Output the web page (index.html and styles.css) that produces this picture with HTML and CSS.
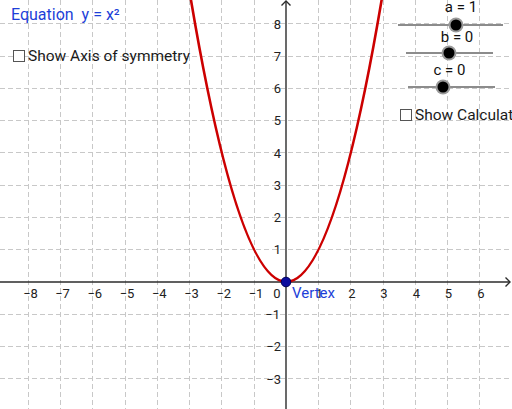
FILE: index.html
```html
<!DOCTYPE html>
<html>
<head>
<meta charset="utf-8">
<link rel="stylesheet" href="styles.css">
</head>
<body>
<div class="board">
  <svg class="canvas" width="512" height="409" viewBox="0 0 512 409" xmlns="http://www.w3.org/2000/svg">
    <g class="grid">
      <line x1="28.5" y1="0" x2="28.5" y2="409"/>
      <line x1="60.5" y1="0" x2="60.5" y2="409"/>
      <line x1="92.5" y1="0" x2="92.5" y2="409"/>
      <line x1="125.5" y1="0" x2="125.5" y2="409"/>
      <line x1="157.5" y1="0" x2="157.5" y2="409"/>
      <line x1="189.5" y1="0" x2="189.5" y2="409"/>
      <line x1="221.5" y1="0" x2="221.5" y2="409"/>
      <line x1="254.5" y1="0" x2="254.5" y2="409"/>
      <line x1="318.5" y1="0" x2="318.5" y2="409"/>
      <line x1="350.5" y1="0" x2="350.5" y2="409"/>
      <line x1="383.5" y1="0" x2="383.5" y2="409"/>
      <line x1="415.5" y1="0" x2="415.5" y2="409"/>
      <line x1="447.5" y1="0" x2="447.5" y2="409"/>
      <line x1="479.5" y1="0" x2="479.5" y2="409"/>
      <line x1="0" y1="23.5" x2="512" y2="23.5"/>
      <line x1="0" y1="56.5" x2="512" y2="56.5"/>
      <line x1="0" y1="88.5" x2="512" y2="88.5"/>
      <line x1="0" y1="120.5" x2="512" y2="120.5"/>
      <line x1="0" y1="152.5" x2="512" y2="152.5"/>
      <line x1="0" y1="185.5" x2="512" y2="185.5"/>
      <line x1="0" y1="217.5" x2="512" y2="217.5"/>
      <line x1="0" y1="249.5" x2="512" y2="249.5"/>
      <line x1="0" y1="314.5" x2="512" y2="314.5"/>
      <line x1="0" y1="346.5" x2="512" y2="346.5"/>
      <line x1="0" y1="378.5" x2="512" y2="378.5"/>
    </g>
    <g class="axes">
      <line x1="0" y1="282" x2="510" y2="282"/>
      <line x1="286" y1="1" x2="286" y2="409"/>
      <polyline class="arrow" points="505.5,277.5 510,282 505.5,286.5"/>
      <polyline class="arrow" points="281.5,5.5 286,1 290.5,5.5"/>
    </g>
    <g class="xlabels">
      <text x="30.5" y="298">−8</text>
      <text x="62.5" y="298">−7</text>
      <text x="94.8" y="298">−6</text>
      <text x="127" y="298">−5</text>
      <text x="159.3" y="298">−4</text>
      <text x="191.5" y="298">−3</text>
      <text x="223.8" y="298">−2</text>
      <text x="256" y="298">−1</text>
      <text x="319.5" y="298">1</text>
      <text x="351.8" y="298">2</text>
      <text x="384" y="298">3</text>
      <text x="416.3" y="298">4</text>
      <text x="448.5" y="298">5</text>
      <text x="480.8" y="298">6</text>
    </g>
    <g class="ylabels">
      <text x="281" y="28.5">8</text>
      <text x="281" y="61">7</text>
      <text x="281" y="93">6</text>
      <text x="281" y="125">5</text>
      <text x="281" y="157.5">4</text>
      <text x="281" y="190">3</text>
      <text x="281" y="222">2</text>
      <text x="281" y="254">1</text>
      <text x="280.5" y="298">0</text>
      <text x="280" y="319">−1</text>
      <text x="281" y="351">−2</text>
      <text x="281" y="383.5">−3</text>
    </g>
    <path class="curve" d="M189.55,-8.45 Q286.3,572.05 383.05,-8.45"/>
    <circle class="vertex" cx="286" cy="282" r="4.8"/>
    <text class="vlabel" x="292" y="298">Vertex</text>

    <g class="slider">
      <text class="slabel" x="461" y="12">a = 1</text>
      <line class="track" x1="398" y1="25" x2="503" y2="25"/>
      <circle class="halo" cx="456" cy="25" r="7.5"/>
      <circle class="knob" cx="456" cy="25" r="5.5"/>
    </g>
    <g class="slider">
      <text class="slabel" x="457" y="42">b = 0</text>
      <line class="track" x1="406" y1="53" x2="493" y2="53"/>
      <circle class="halo" cx="449" cy="53" r="7.5"/>
      <circle class="knob" cx="449" cy="53" r="5.5"/>
    </g>
    <g class="slider">
      <text class="slabel" x="449.5" y="74.5">c = 0</text>
      <line class="track" x1="408" y1="87" x2="495" y2="87"/>
      <circle class="halo" cx="443" cy="87" r="7.5"/>
      <circle class="knob" cx="443" cy="87" r="5.5"/>
    </g>
  </svg>

  <div class="equation">Equation&nbsp; y = x²</div>
  <label class="check check-axis"><span class="box"></span>Show Axis of symmetry</label>
  <label class="check check-calc"><span class="box"></span>Show Calculations</label>
</div>
</body>
</html>
```
FILE: styles.css
```css
html, body {
  margin: 0;
  padding: 0;
  background: #ffffff;
}

.board {
  position: relative;
  width: 512px;
  height: 409px;
  overflow: hidden;
  font-family: Roboto, "Noto Sans", sans-serif;
}

.canvas {
  display: block;
}

.grid line {
  stroke: #c8c8c8;
  stroke-width: 1;
  stroke-dasharray: 5 3;
}

.axes line,
.axes .arrow {
  stroke: #2b2b2b;
  stroke-width: 1.4;
  fill: none;
}

.xlabels text {
  font: 13px Roboto, sans-serif;
  fill: #222;
  text-anchor: middle;
}

.ylabels text {
  font: 13px Roboto, sans-serif;
  fill: #222;
  text-anchor: end;
}

.curve {
  fill: none;
  stroke: #cc0000;
  stroke-width: 2.6;
}

.vertex {
  fill: #0c0c9e;
  stroke: #00005a;
  stroke-width: 1;
}

.vlabel {
  font: 15px Roboto, sans-serif;
  fill: #1d3fd8;
}

.slabel {
  font: 15px Roboto, sans-serif;
  fill: #111;
  text-anchor: middle;
}

.track {
  stroke: #8c8c8c;
  stroke-width: 2;
}

.halo {
  fill: #9a9a9a;
}

.knob {
  fill: #000;
}

.equation {
  position: absolute;
  left: 11px;
  top: 5px;
  font-size: 16px;
  line-height: 19px;
  color: #1d3fd8;
  white-space: nowrap;
}

.check {
  position: absolute;
  display: flex;
  align-items: center;
  gap: 3px;
  font-size: 15.5px;
  line-height: 20px;
  color: #1a1a1a;
  white-space: nowrap;
}

.check-axis {
  left: 13px;
  top: 46px;
}

.check-calc {
  left: 400px;
  top: 105px;
}

.box {
  display: block;
  width: 10px;
  height: 10px;
  border: 1px solid #555;
  background: #fff;
}
```
